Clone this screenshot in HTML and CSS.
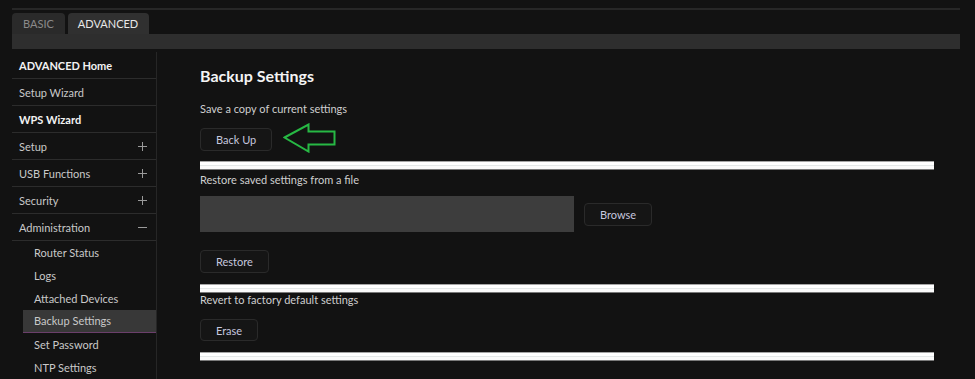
FILE: index.html
```html
<!DOCTYPE html>
<html lang="en">
<head>
    <meta charset="UTF-8">
    <meta name="viewport" content="width=device-width, initial-scale=1.0">
    <title>Backup Settings</title>

    <link rel="stylesheet" href="styles.css">
</head>
<body>
    <div class="frame">
        <div class="tabs">
            <div class="tab">BASIC</div>
            <div class="tab active">ADVANCED</div>
        </div>
        <div class="tabbar"></div>

        <div class="layout">
            <nav class="sidebar">
                <div class="item bold">ADVANCED Home</div>
                <div class="item">Setup Wizard</div>
                <div class="item bold">WPS Wizard</div>
                <div class="item">Setup <span class="sign plus"></span></div>
                <div class="item">USB Functions <span class="sign plus"></span></div>
                <div class="item">Security <span class="sign plus"></span></div>
                <div class="item">Administration <span class="sign"></span></div>
                <div class="sub">
                    <div class="sub-item">Router Status</div>
                    <div class="sub-item">Logs</div>
                    <div class="sub-item">Attached Devices</div>
                    <div class="sub-item selected">Backup Settings</div>
                    <div class="sub-item">Set Password</div>
                    <div class="sub-item">NTP Settings</div>
                </div>
            </nav>

            <main class="content">
                <h1>Backup Settings</h1>

                <p class="label first">Save a copy of current settings</p>
                <div class="row backup-row">
                    <button class="btn">Back Up</button>
                    <svg class="arrow" width="53" height="30" viewBox="0 0 53 30">
                        <path d="M1.5 14.5 L25.5 1.5 L25.5 8.5 L51.5 8.5 L51.5 21.5 L25.5 21.5 L25.5 28.5 Z" fill="none" stroke="#27b844" stroke-width="2" stroke-linejoin="miter"/>
                    </svg>
                </div>
                <div class="divider"></div>

                <p class="label">Restore saved settings from a file</p>
                <div class="row file-row">
                    <div class="file-box"></div>
                    <button class="btn">Browse</button>
                </div>
                <button class="btn restore">Restore</button>
                <div class="divider"></div>

                <p class="label">Revert to factory default settings</p>
                <button class="btn erase">Erase</button>
                <div class="divider"></div>
            </main>
        </div>
    </div>
</body>
</html>
```

FILE: styles.css
```css
* {
    box-sizing: border-box;
}

body {
    margin: 0;
    background: #121212;
    font-family: Lato, "Open Sans", sans-serif;
    color: #d2d2d2;
    height: 379px;
    overflow: hidden;
}

.frame {
    width: 948px;
    margin: 8px 0 0 12px;
    border-top: 2px solid #272727;
}

.tabs {
    display: flex;
    gap: 3px;
    padding-top: 3px;
}

.tab {
    height: 21px;
    padding: 0 11px;
    line-height: 21px;
    font-size: 11px;
    color: #8a8a8a;
    background: #2a2a2a;
    border-radius: 4px 4px 0 0;
}

.tab.active {
    color: #e8e8e8;
    background: #303030;
    padding: 0 11px 0 10px;
}

.tabbar {
    height: 15px;
    background: #2e2e2e;
}

.layout {
    display: flex;
    margin-top: 3px;
}

.sidebar {
    width: 145px;
    flex-shrink: 0;
    border-right: 1px solid #262626;
}

.item {
    height: 27px;
    padding: 0 9px 0 7px;
    display: flex;
    align-items: center;
    justify-content: space-between;
    font-size: 11px;
    color: #c9c9c9;
    border-bottom: 1px solid #2c2c2c;
}

.item.bold {
    font-weight: bold;
    color: #f2f2f2;
}

.sign {
    position: relative;
    width: 9px;
    height: 9px;
}

.sign::before,
.plus::after {
    content: "";
    position: absolute;
    background: #9a9a9a;
}

.sign::before {
    left: 0;
    top: 4px;
    width: 9px;
    height: 1px;
}

.plus::after {
    left: 4px;
    top: 0;
    width: 1px;
    height: 9px;
}

.sub {
    padding-left: 11px;
}

.sub-item {
    height: 23px;
    line-height: 23px;
    padding-left: 11px;
    font-size: 11px;
    color: #c9c9c9;
}

.sub-item.selected {
    background: #383838;
    border-bottom: 1px solid #6b3f6b;
    line-height: 22px;
}

.content {
    flex: 1;
    padding: 14px 0 0 43px;
}

h1 {
    margin: 0;
    font-size: 16px;
    line-height: 20px;
    font-weight: bold;
    color: #f4f4f4;
}

.label {
    margin: 0;
    font-size: 11px;
    line-height: 14px;
    color: #cfcfcf;
}

.label.first {
    margin-top: 16px;
}

.row {
    display: flex;
    align-items: center;
}

.btn {
    display: block;
    height: 23px;
    padding: 0 15px;
    font-family: inherit;
    font-size: 11px;
    color: #c6c7df;
    background: #151515;
    border: 1px solid #2a2a2a;
    border-radius: 4px;
}

.backup-row {
    margin-top: 12px;
    gap: 11px;
}

.arrow {
    display: block;
    margin: -5px 0 -2px;
}

.divider {
    width: 734px;
    height: 9px;
    margin: 10px 0 3px;
    background: #fafafa;
    border-top: 1px solid #a5a5a5;
    border-bottom: 1px solid #7a7a7a;
    box-shadow: inset 0 3px 0 #fff, inset 0 4px 0 #e4e8e8;
}

.file-row {
    margin-top: 9px;
    gap: 10px;
}

.file-box {
    width: 374px;
    height: 36px;
    background: #3d3d3d;
}

.restore {
    margin-top: 18px;
}

.restore + .divider {
    margin: 11px 0 0;
}

.erase {
    margin-top: 12px;
    height: 22px;
}

.erase + .divider {
    margin-top: 11px;
}
```
